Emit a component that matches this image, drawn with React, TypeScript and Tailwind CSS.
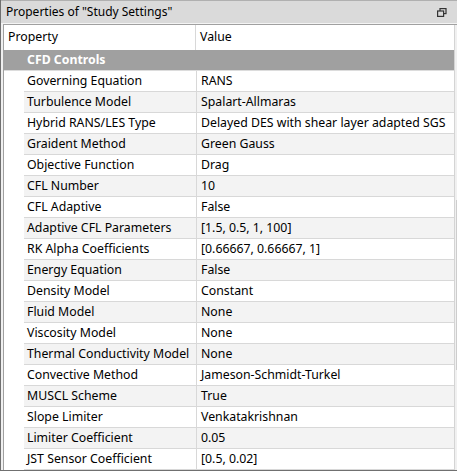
const rows: [string, string][] = [
  ['Governing Equation', 'RANS'],
  ['Turbulence Model', 'Spalart-Allmaras'],
  ['Hybrid RANS/LES Type', 'Delayed DES with shear layer adapted SGS'],
  ['Graident Method', 'Green Gauss'],
  ['Objective Function', 'Drag'],
  ['CFL Number', '10'],
  ['CFL Adaptive', 'False'],
  ['Adaptive CFL Parameters', '[1.5, 0.5, 1, 100]'],
  ['RK Alpha Coefficients', '[0.66667, 0.66667, 1]'],
  ['Energy Equation', 'False'],
  ['Density Model', 'Constant'],
  ['Fluid Model', 'None'],
  ['Viscosity Model', 'None'],
  ['Thermal Conductivity Model', 'None'],
  ['Convective Method', 'Jameson-Schmidt-Turkel'],
  ['MUSCL Scheme', 'True'],
  ['Slope Limiter', 'Venkatakrishnan'],
  ['Limiter Coefficient', '0.05'],
  ['JST Sensor Coefficient', '[0.5, 0.02]'],
];

function RestoreIcon() {
  return (
    <svg width="10" height="9" viewBox="0 0 10 9" fill="none" stroke="#333" strokeWidth="1.2">
      <rect x="3" y="0.6" width="6" height="5" />
      <rect x="0.6" y="3" width="6" height="5.4" fill="#dadada" />
    </svg>
  );
}

export default function App() {
  return (
    <div className="w-[457px] h-[471px] overflow-hidden bg-[#f0f0f0] border-l border-b border-[#707070] font-['Noto_Sans',sans-serif] text-[12.3px] text-black flex flex-col">
      {/* Title bar */}
      <div className="h-[23px] shrink-0 bg-[#dadada] border-t border-[#b0b0b0] flex items-center justify-between pl-[5px] pr-[10px]">
        <span className="text-[12px] leading-none">Properties of "Study Settings"</span>
        <RestoreIcon />
      </div>
      <div className="h-[1px] shrink-0 bg-[#f4f4f4]" />

      {/* Property grid */}
      <div className="flex-1 ml-[2px] border-l border-t border-[#a0a0a0] flex min-h-0">
        <div className="w-[450px] shrink-0 bg-white flex flex-col">
          <div className="h-[25px] flex items-center">
            <div className="w-[191px] pl-[4px]">Property</div>
            <div className="h-full border-l border-[#d8d8d8] pl-[4px] flex items-center">Value</div>
          </div>
          <div className="h-[21px] bg-[#a0a0a0] text-white font-bold flex items-center pl-[23px] border-b border-[#dcdcdc]">
            CFD Controls
          </div>
          {rows.map(([name, value], i) => (
            <div key={name} className="h-[21px] flex">
              <div className="w-[20px] shrink-0 bg-white" />
              <div
                className={`flex-1 flex border-b border-[#d8d8d8] ${i % 2 === 1 ? 'bg-[#f3f3f3]' : 'bg-white'}`}
              >
                <div className="w-[172px] shrink-0 pl-[3px] flex items-center whitespace-nowrap">{name}</div>
                <div className="flex-1 border-l border-[#d8d8d8] pl-[4px] flex items-center whitespace-nowrap">{value}</div>
              </div>
            </div>
          ))}
        </div>
        {/* Scrollbar */}
        <div className="flex-1 border-l border-[#d4d4d4] bg-[#f0f0f0] flex flex-col">
          <div className="h-[175px]" />
          <div className="h-[170px] ml-[1px] bg-[#cdcdcd]" />
        </div>
      </div>
    </div>
  );
}
